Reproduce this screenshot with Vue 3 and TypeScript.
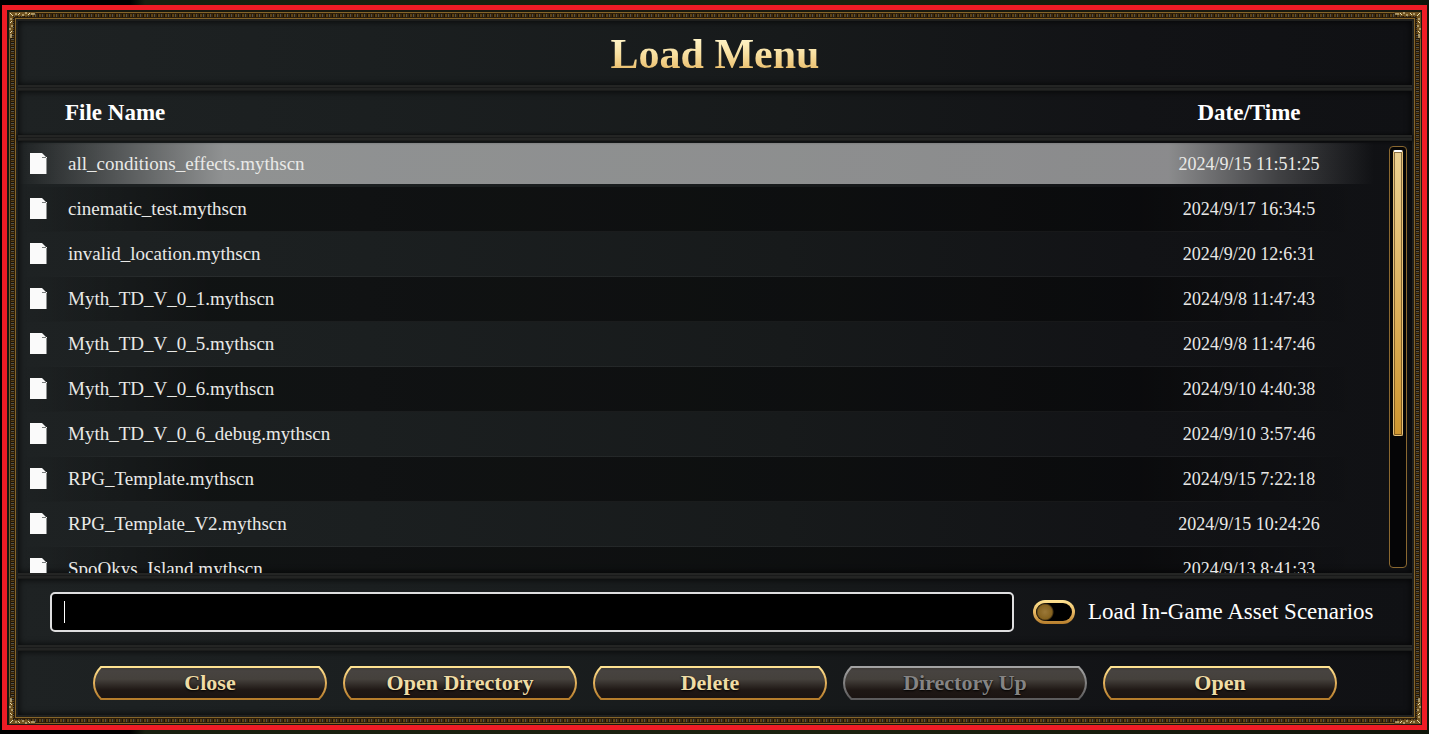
<script setup lang="ts">
import { ref } from 'vue'

interface ScenarioFile {
  name: string
  date: string
}

interface Action {
  label: string
  disabled?: boolean
  wide?: boolean
}

const files: ScenarioFile[] = [
  { name: 'all_conditions_effects.mythscn', date: '2024/9/15 11:51:25' },
  { name: 'cinematic_test.mythscn', date: '2024/9/17 16:34:5' },
  { name: 'invalid_location.mythscn', date: '2024/9/20 12:6:31' },
  { name: 'Myth_TD_V_0_1.mythscn', date: '2024/9/8 11:47:43' },
  { name: 'Myth_TD_V_0_5.mythscn', date: '2024/9/8 11:47:46' },
  { name: 'Myth_TD_V_0_6.mythscn', date: '2024/9/10 4:40:38' },
  { name: 'Myth_TD_V_0_6_debug.mythscn', date: '2024/9/10 3:57:46' },
  { name: 'RPG_Template.mythscn', date: '2024/9/15 7:22:18' },
  { name: 'RPG_Template_V2.mythscn', date: '2024/9/15 10:24:26' },
  { name: 'SpoOkys_Island.mythscn', date: '2024/9/13 8:41:33' },
]

const actions: Action[] = [
  { label: 'Close' },
  { label: 'Open Directory' },
  { label: 'Delete' },
  { label: 'Directory Up', disabled: true, wide: true },
  { label: 'Open' },
]

const corners = ['tl', 'tr', 'bl', 'br']
const selected = ref(0)
const fileName = ref('')
const showInGame = ref(false)
</script>

<template>
  <div class="screen">
    <svg class="defs" width="0" height="0" aria-hidden="true">
      <defs>
        <linearGradient id="gold-edge" x1="0" y1="0" x2="0" y2="1">
          <stop offset="0" stop-color="#ffe392" />
          <stop offset="0.4" stop-color="#e9b964" />
          <stop offset="1" stop-color="#b57c2b" />
        </linearGradient>
        <linearGradient id="grey-edge" x1="0" y1="0" x2="0" y2="1">
          <stop offset="0" stop-color="#a3a3a3" />
          <stop offset="1" stop-color="#5c5b5c" />
        </linearGradient>
        <linearGradient id="button-face" x1="0" y1="0" x2="0" y2="1">
          <stop offset="0" stop-color="#3c3834" />
          <stop offset="0.12" stop-color="#474340" />
          <stop offset="0.38" stop-color="#45413c" />
          <stop offset="0.72" stop-color="#1f1815" />
          <stop offset="1" stop-color="#1a1311" />
        </linearGradient>
      </defs>
    </svg>

    <main class="window">
      <div class="ornament">
        <svg
          v-for="corner in corners"
          :key="corner"
          class="corner"
          :class="corner"
          viewBox="0 0 27 27"
          width="27"
          height="27"
          aria-hidden="true"
        >
          <path d="M0 0H27V1L20 4H4V20L1 27H0Z" fill="#6f5220" />
          <path d="M1 1L4 4M7 1V3M9 3L11 1M13 3H15M16 1H18M19 3L21 1M22 2H26M1 7H3M3 9L1 11M3 13V15M1 16V18M3 19L1 21M2 22V26" fill="none" stroke="#ecdfae" />
        </svg>

        <div class="panels">
          <header class="panel title-panel">
            <h1>Load Menu</h1>
          </header>

          <div class="divider"></div>

          <section class="panel list-panel">
            <div class="table-clip">
              <table>
                <colgroup>
                  <col class="col-icon" />
                  <col />
                  <col class="col-date" />
                </colgroup>
                <thead>
                  <tr>
                    <th colspan="2" scope="col" class="head-name">File Name</th>
                    <th scope="col">Date/Time</th>
                  </tr>
                </thead>
                <tbody>
                  <tr
                    v-for="(file, index) in files"
                    :key="file.name"
                    :class="{ selected: index === selected }"
                    @click="selected = index"
                  >
                    <td class="icon-cell">
                      <svg width="17" height="21" viewBox="0 0 17 21" aria-hidden="true">
                        <path d="M0 0H12V4H17V21H0Z" fill="#fafafa" />
                        <path d="M12 0L16 4H12Z" fill="#fafafa" />
                        <path d="M12 4.5H16" stroke="#777b7b" />
                        <path d="M16.5 5V21" stroke="#8d9090" />
                      </svg>
                    </td>
                    <td class="name-cell">{{ file.name }}</td>
                    <td class="date-cell">{{ file.date }}</td>
                  </tr>
                </tbody>
              </table>
            </div>
            <div class="head-divider divider"></div>
            <div class="rail">
              <div class="track">
                <div class="thumb"></div>
              </div>
            </div>
          </section>

          <div class="divider"></div>

          <section class="panel input-panel">
            <div class="field">
              <input v-model="fileName" type="text" aria-label="File name" />
              <span v-if="!fileName" class="caret"></span>
            </div>
            <label class="toggle">
              <input v-model="showInGame" type="checkbox" />
              <span>Load In-Game Asset Scenarios</span>
            </label>
          </section>

          <div class="divider"></div>

          <footer class="panel actions">
            <button
              v-for="action in actions"
              :key="action.label"
              type="button"
              :disabled="action.disabled"
              :class="{ wide: action.wide }"
            >
              <svg viewBox="0 0 234 34" preserveAspectRatio="none" aria-hidden="true">
                <path
                  d="M8 1H226Q233 8 233 17Q233 26 226 33H8Q1 26 1 17Q1 8 8 1Z"
                  fill="url(#button-face)"
                  :stroke="action.disabled ? 'url(#grey-edge)' : 'url(#gold-edge)'"
                  stroke-width="2"
                />
              </svg>
              <span>{{ action.label }}</span>
            </button>
          </footer>
        </div>
      </div>
    </main>
  </div>
</template>

<style>
body {
  margin: 0;
  background: #161b0e;
}
</style>

<style scoped>
* {
  box-sizing: border-box;
}

.screen {
  display: flex;
  height: 100vh;
  min-height: 420px;
  padding: 5px 2px 4px;
  background: linear-gradient(90deg, #000000 0, #000000 130px, #182010 145px, #1b220f 60%, #10150a 100%);
  color: #ffffff;
  font-family: "Liberation Serif", "Times New Roman", serif;
}

.defs {
  position: absolute;
}

.window {
  display: flex;
  flex: 1;
  min-width: 0;
  padding: 2px 1px 1px 2px;
  border: 5px solid #ee1c25;
  background: #171910;
}

/* Meander-like metal frame: two gold rails around a notched brown band. */
.ornament {
  position: relative;
  display: flex;
  flex: 1;
  min-width: 0;
  padding: 5px;
  border: 1px solid #86652a;
  background:
    repeating-linear-gradient(90deg, #17120b 0 1px, #5f4315 1px 3px, #30210c 3px 4px, #55534a 4px 5px, #3d290c 5px 7px) 0 1px / 100% 3px no-repeat,
    repeating-linear-gradient(90deg, #17120b 0 1px, #5f4315 1px 3px, #30210c 3px 4px, #55534a 4px 5px, #3d290c 5px 7px) 0 calc(100% - 1px) / 100% 3px no-repeat,
    repeating-linear-gradient(0deg, #17120b 0 1px, #5f4315 1px 2px, #30210c 2px 3px, #55534a 3px 4px) 1px 0 / 3px 100% no-repeat,
    repeating-linear-gradient(0deg, #17120b 0 1px, #5f4315 1px 2px, #30210c 2px 3px, #55534a 3px 4px) calc(100% - 1px) 0 / 3px 100% no-repeat,
    #2b1d0a;
}

.corner {
  position: absolute;
  z-index: 2;
}

.tl {
  top: -1px;
  left: -1px;
}

.tr {
  top: -1px;
  right: -1px;
  transform: scaleX(-1);
}

.bl {
  bottom: -1px;
  left: -1px;
  transform: scaleY(-1);
}

.br {
  right: -1px;
  bottom: -1px;
  transform: scale(-1);
}

.panels {
  display: flex;
  flex: 1;
  flex-direction: column;
  min-width: 0;
  padding: 2px;
  border: 1px solid #86652a;
  background: #1e1f1e;
}

.panel {
  flex: none;
  background: linear-gradient(90deg, #1e2223 0%, #1b1f20 25%, #171a1b 55%, #121316 80%, #101114 100%);
  box-shadow: inset 0 0 6px 1px rgba(0, 0, 0, 0.7);
}

.divider {
  flex: none;
  height: 6px;
  background: linear-gradient(180deg, #242524 0 2px, #191a1a 2px 3px, #232423 3px 5px, #1b1c1b 5px 6px);
}

.title-panel {
  display: flex;
  align-items: center;
  justify-content: center;
  height: 64px;
  padding-top: 2px;
}

h1 {
  margin: 0;
  background: linear-gradient(180deg, #fff3c6 20%, #f8dfa0 50%, #ecc272 80%);
  background-clip: text;
  color: transparent;
  font-size: 42px;
  font-weight: 700;
  line-height: 48px;
}

.list-panel {
  position: relative;
  display: flex;
  flex: 1 1 0;
  min-height: 0;
}

.head-divider {
  position: absolute;
  top: 44px;
  right: 0;
  left: 0;
  box-shadow: 0 0 3px 1px rgba(0, 0, 0, 0.5);
}

.table-clip {
  flex: 1;
  min-width: 0;
  overflow: hidden;
}

table {
  width: 100%;
  border-collapse: collapse;
  table-layout: fixed;
}

.col-icon {
  width: 50px;
}

.col-date {
  width: 278px;
}

th {
  height: 51px;
  padding: 0 0 8px;
  font-size: 23px;
  font-weight: 700;
  line-height: 24px;
}

.head-name {
  padding-left: 47px;
  text-align: left;
}

tbody tr {
  height: 45px;
  background: linear-gradient(90deg, transparent 2%, rgba(255, 255, 255, 0.05) 10%, rgba(255, 255, 255, 0.05) 85%, transparent 97%) 0 100% / 100% 1px no-repeat;
}

tbody tr:nth-child(even) {
  background:
    linear-gradient(90deg, transparent 2%, rgba(255, 255, 255, 0.05) 10%, rgba(255, 255, 255, 0.05) 85%, transparent 97%) 0 100% / 100% 1px no-repeat,
    linear-gradient(90deg, transparent 0, rgba(0, 0, 0, 0.42) 14%, rgba(0, 0, 0, 0.42) 82%, transparent 98%);
}

tbody tr.selected {
  background: linear-gradient(90deg, transparent 0, rgba(255, 255, 255, 0.2) 6%, rgba(255, 255, 255, 0.51) 15%, rgba(255, 255, 255, 0.51) 84%, rgba(255, 255, 255, 0.2) 92%, transparent 99%) 0 1px / 100% 41px no-repeat;
}

td {
  padding: 0 0 2px;
  color: #e9e9e7;
  white-space: nowrap;
}

.icon-cell {
  padding-left: 12px;
}

.icon-cell svg {
  display: block;
}

.name-cell {
  font-size: 19px;
  line-height: 24px;
}

.date-cell {
  font-size: 18px;
  line-height: 24px;
  text-align: center;
}

.rail {
  display: flex;
  flex: none;
  width: 24px;
  padding: 55px 5px 5px 1px;
}

.track {
  flex: 1;
  padding: 3px;
  border: 1px solid #8a6830;
  border-radius: 4px;
  background: #050506;
}

.thumb {
  height: 69%;
  border: 1px solid #e6c27a;
  border-top: 2px solid #ffffff;
  border-radius: 2px;
  background: linear-gradient(180deg, #ebd092, #dcae57 60%, #cf962f);
  box-shadow: inset 0 0 0 1px rgba(70, 45, 15, 0.6);
}

.input-panel {
  display: flex;
  align-items: center;
  gap: 19px;
  height: 66px;
  padding: 0 33px 0 32px;
}

.field {
  position: relative;
  flex: 1;
  min-width: 0;
}

.field input {
  display: block;
  width: 100%;
  height: 40px;
  padding: 0 12px;
  border: 2px solid #dededf;
  border-radius: 5px;
  outline: none;
  background: #000000;
  color: #ffffff;
  font: 20px "Liberation Serif", "Times New Roman", serif;
}

.caret {
  position: absolute;
  top: 9px;
  left: 14px;
  width: 1px;
  height: 22px;
  background: #ffffff;
}

.field input:focus + .caret {
  display: none;
}

.toggle {
  display: flex;
  flex: 0 0 346px;
  align-items: center;
  gap: 13px;
  font-size: 23px;
  line-height: 28px;
  white-space: nowrap;
}

.toggle input {
  width: 42px;
  height: 24px;
  margin: 0;
  border: 3px solid transparent;
  border-radius: 12px;
  appearance: none;
  background:
    radial-gradient(circle at 9px 9px, #9b7838 0, #85621f 7px, #4b3714 8px, transparent 9px) padding-box,
    linear-gradient(#000000, #000000) padding-box,
    linear-gradient(180deg, #ffe392, #e9b964 50%, #b57c2b) border-box;
}

.toggle input:checked {
  background:
    radial-gradient(circle at 27px 9px, #f0cf80 0, #d9a94c 7px, #4b3714 8px, transparent 9px) padding-box,
    linear-gradient(#000000, #000000) padding-box,
    linear-gradient(180deg, #ffe392, #e9b964 50%, #b57c2b) border-box;
}

.actions {
  display: flex;
  align-items: center;
  justify-content: center;
  gap: 16px;
  height: 64px;
  padding: 0 20px;
}

button {
  display: grid;
  flex: 0 1 234px;
  place-items: center;
  height: 34px;
  padding: 0;
  border: 0;
  background: none;
  color: #efdca5;
  font: 700 22px/24px "Liberation Serif", "Times New Roman", serif;
  text-shadow: 0 1px 2px #000000;
}

button svg,
button span {
  grid-area: 1 / 1;
}

button svg {
  width: 100%;
  height: 34px;
}

button.wide {
  flex-basis: 244px;
}

button:disabled {
  color: #858484;
}
</style>
